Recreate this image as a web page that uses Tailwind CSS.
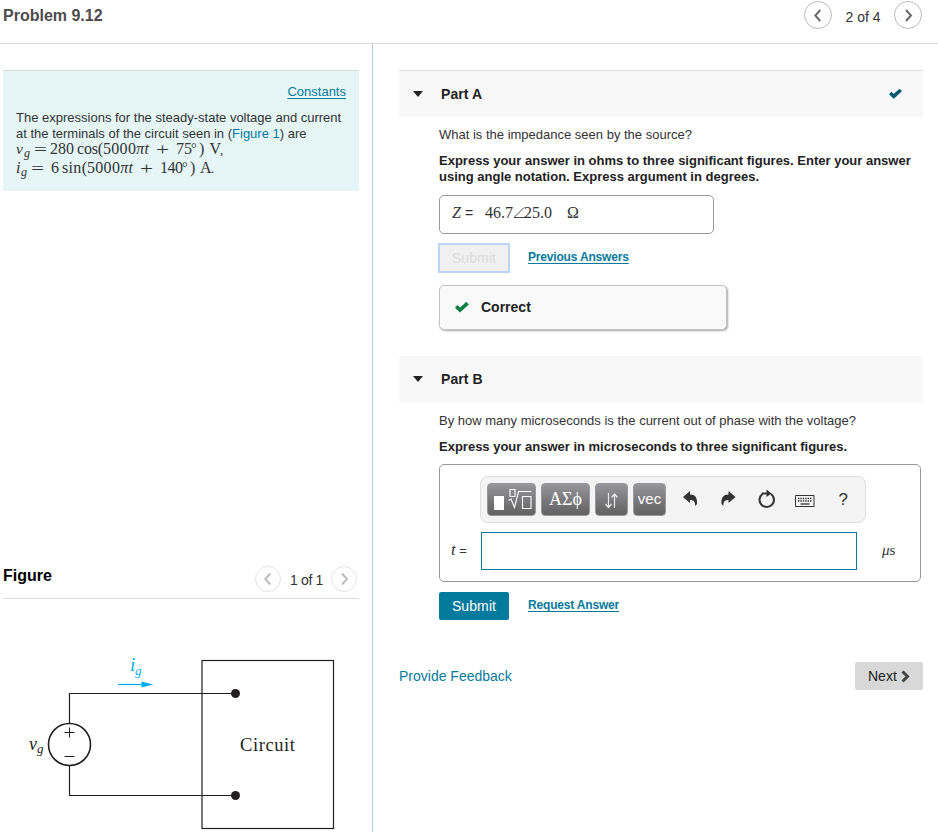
<!DOCTYPE html>
<html lang="en">
<head>
<meta charset="utf-8">
<title>Problem 9.12</title>
<script src="https://cdn.jsdelivr.net/npm/@tailwindcss/browser@4"></script>
</head>
<body class="w-[938px] h-[832px] overflow-hidden bg-white font-['Liberation_Sans',Arial,sans-serif] text-[13px] leading-4 text-[#333]">
<header class="h-11 border-b border-[#dcdcdc] flex justify-between pl-[3px] pr-4">
  <h1 class="text-base leading-[18px] font-bold text-[#4c4c4c] pt-[7px]">Problem 9.12</h1>
  <nav class="flex pt-px text-sm">
    <button class="size-7 rounded-full border border-[#bbb]" aria-label="Previous">
      <svg class="block size-[26px]" viewBox="0 0 26 26" fill="none" stroke="#666" stroke-width="1.900"><path d="M15.300 8 10.300 13.500l5 5.500"/></svg>
    </button>
    <span class="w-[62px] text-center pt-[6px]">2 of 4</span>
    <button class="size-7 rounded-full border border-[#bbb]" aria-label="Next">
      <svg class="block size-[26px]" viewBox="0 0 26 26" fill="none" stroke="#666" stroke-width="1.900"><path d="m11 8 5 5.500-5 5.500"/></svg>
    </button>
  </nav>
</header>
<div class="flex h-[788px]">
  <aside class="w-[373px] shrink-0 border-r border-[#b5cbdf] pl-[3px] pr-[13px] pt-[26px] flex flex-col">
    <section class="h-[121px] border-t border-[#dcdcdc] bg-[#e6f6f7] pl-[13px] pr-[13px] pt-[13px]">
      <div class="text-right text-[#067a9c]"><a class="underline underline-offset-2">Constants</a></div>
      <p class="mt-[10px] whitespace-nowrap">The expressions for the steady-state voltage and current<br>at the terminals of the circuit seen in (<a class="text-[#067a9c]">Figure 1</a>) are</p>
      <svg class="block overflow-visible w-[330px] h-[42px] font-['Liberation_Serif',serif]" viewBox="16 142 330 42" font-size="16" fill="#333">
        <g>
          <text x="16" y="154" font-style="italic" font-size="15.500">v</text><text x="24" y="157" font-style="italic" font-size="12">g</text>
          <text x="34" y="155" textLength="13" lengthAdjust="spacingAndGlyphs">=</text>
          <text x="50" y="154" textLength="24">280</text><text x="77" y="154" textLength="26">cos(</text>
          <text x="103" y="154" textLength="46">5000<tspan font-style="italic">πt</tspan></text>
          <text x="156" y="155" textLength="13" lengthAdjust="spacingAndGlyphs">+</text>
          <text x="176" y="154" textLength="16">75</text><text x="191" y="153" font-size="14">°</text><text x="199" y="154">)</text>
          <text x="209.500" y="154">V</text><text x="220" y="154" font-size="13">,</text>
        </g>
        <g>
          <text x="16" y="173" font-style="italic" font-size="16">i</text><text x="21" y="176" font-style="italic" font-size="12">g</text>
          <text x="31" y="174" textLength="13" lengthAdjust="spacingAndGlyphs">=</text>
          <text x="51" y="173">6</text><text x="62" y="173" textLength="25">sin(</text>
          <text x="87" y="173" textLength="46">5000<tspan font-style="italic">πt</tspan></text>
          <text x="140" y="174" textLength="13" lengthAdjust="spacingAndGlyphs">+</text>
          <text x="160" y="173" textLength="23">140</text><text x="182" y="172" font-size="14">°</text><text x="190" y="173">)</text>
          <text x="200" y="173">A</text><text x="211" y="173" font-size="13">.</text>
        </g>
      </svg>
    </section>
    <section class="mt-[375px]">
      <div class="flex justify-between h-[33px] border-b border-[#dcdcdc] pr-[2px]">
        <h2 class="text-base leading-[18px] font-bold text-black pt-px">Figure</h2>
        <nav class="flex text-sm">
          <button class="size-[26px] rounded-full border border-[#e4e4e4]" aria-label="Previous figure"><svg class="block size-6" viewBox="0 0 24 24" fill="none" stroke="#bbb" stroke-width="1.900"><path d="m14.300 6.500-5 5.500 5 5.500"/></svg></button>
          <span class="w-[50px] text-center pt-[4px] pl-px tracking-[-0.3px]">1 of 1</span>
          <button class="size-[26px] rounded-full border border-[#e4e4e4]" aria-label="Next figure"><svg class="block size-6" viewBox="0 0 24 24" fill="none" stroke="#bbb" stroke-width="1.900"><path d="m10 6.500 5 5.500-5 5.500"/></svg></button>
        </nav>
      </div>
      <svg class="block w-[356px] h-[232px]" viewBox="3 599 356 232" fill="none" stroke="#231f20" stroke-width="1.200" font-family="'Liberation Serif',serif">
        <rect x="202" y="660.500" width="131.500" height="168"/>
        <path d="M69.500 723v-29.500h165.500M69.500 765v30.500h165.500"/>
        <circle cx="69.500" cy="744.500" r="21" stroke-width="1.600"/>
        <path d="M64.500 732.500h10M69.500 727.500v10M64.500 756.500h10" stroke-width="1"/>
        <circle cx="235.500" cy="693.500" r="4.500" fill="#231f20" stroke="none"/>
        <circle cx="235.500" cy="795.500" r="4.500" fill="#231f20" stroke="none"/>
        <path d="M118 684.500h25" stroke="#00aeef"/><path d="m141.500 681.500 12 3-12 3z" fill="#00aeef" stroke="none"/>
        <g stroke="none" font-style="italic"><text x="130" y="671" font-size="19" fill="#00aeef">i</text><text x="135" y="675" font-size="13" fill="#00aeef">g</text>
        <text x="29" y="750" font-size="18" fill="#231f20">v</text><text x="37" y="753" font-size="13" fill="#231f20">g</text></g>
        <text x="240" y="751" font-size="18.500" textLength="55" fill="#231f20" stroke="none">Circuit</text>
      </svg>
    </section>
  </aside>
  <main class="w-[550px] pl-[26px] pt-[26px]">
    <section>
      <div class="h-[47px] border-t border-[#dcdcdc] bg-[#f8f8f8] flex items-center pl-[14px] pr-[21px]">
        <svg class="w-[10px] h-[6px]" viewBox="0 0 10 6"><path d="M0 0h10L5 6z" fill="#222"/></svg>
        <h3 class="ml-[18px] text-sm font-bold text-[#222] grow tracking-[0.1px]">Part A</h3>
        <svg class="w-[13px] h-[11px] mb-[2px]" viewBox="0 0 13 11" fill="none" stroke="#005a70" stroke-width="3.600"><path d="m1.200 5 3.600 3.300 6.900-6.300"/></svg>
      </div>
      <div class="pl-10 pt-[10px]">
        <p>What is the impedance seen by the source?</p>
        <p class="mt-[10px] font-bold whitespace-nowrap text-[#222]">Express your answer in ohms to three significant figures. Enter your answer<br>using angle notation. Express argument in degrees.</p>
        <div class="mt-[10px] w-[275px] h-[39px] rounded-[5px] border border-[#999] font-['Liberation_Serif',serif]">
          <svg class="w-[273px] h-[37px]" viewBox="440 196 273 37" font-size="16" fill="#333"><text x="452" y="218" font-style="italic">Z</text><text x="465" y="218" font-size="14" font-family="Liberation Sans,sans-serif">=</text><text x="485" y="218" textLength="28">46.7</text><path d="M524 207.500 514 217.500h11" fill="none" stroke="#333" stroke-width=".9"/><text x="524" y="218" textLength="28">25.0</text><text x="567" y="218">Ω</text></svg>
        </div>
        <div class="flex mt-[9px] -ml-px">
          <button class="w-[72px] h-[30px] border-2 border-[#bcd4f8] bg-[#f0f0f0] text-sm text-[#ddd] tracking-[0.1px]">Submit</button>
          <a class="ml-[18px] mt-[6px] text-xs font-bold underline underline-offset-2 tracking-[-0.18px] text-[#067a9c]">Previous Answers</a>
        </div>
        <div class="mt-3 w-[288px] h-[45px] border border-[#c2c2c2] rounded-[5px] bg-[#f9f9f9] shadow-[1px_1px_2px_#aaa] flex items-center pl-[15px] pb-px">
          <svg class="w-[14px] h-[12px]" viewBox="0 0 14 12" fill="none" stroke="#0b8043" stroke-width="3.600"><path d="m1.200 5.400 3.800 3.600 7.600-6.800"/></svg>
          <span class="ml-[12px] text-sm font-bold text-[#222]">Correct</span>
        </div>
      </div>
    </section>
    <section class="mt-[26px]">
      <div class="h-[46px] bg-[#f8f8f8] flex items-center pl-[14px]">
        <svg class="w-[10px] h-[6px]" viewBox="0 0 10 6"><path d="M0 0h10L5 6z" fill="#222"/></svg>
        <h3 class="ml-[18px] text-sm font-bold text-[#222] tracking-[0.1px]">Part B</h3>
      </div>
      <div class="pl-10 pt-[11px]">
        <p>By how many microseconds is the current out of phase with the voltage?</p>
        <p class="mt-[10px] font-bold text-[#222]">Express your answer in microseconds to three significant figures.</p>
        <div class="mt-[9px] w-[482px] h-[118px] border border-[#999] rounded-[5px] pt-[11px]">
          <div class="ml-10 w-[386px] h-[47px] rounded-lg border border-[#ddd] bg-[#f4f4f4] flex pt-[6px] pl-[6px] gap-[5px] text-white">
            <button class="w-[49px] h-[33px] rounded bg-linear-to-b from-[#96959b] to-[#626262] border border-[#999]" aria-label="Templates"><svg class="w-[47px] h-[31px]" viewBox="0 0 47 31" fill="none" stroke="#fff" stroke-width="1.100"><path d="M6 12h10v14H6z" fill="#fff" stroke="none"/><path d="m20.500 16.500 2.500-1.500 3.500 8.500 4-16h13"/><path d="M34.500 12.500h8.500v12h-8.500zM22 5.500h5v7h-5z"/></svg></button>
            <button class="w-[49px] h-[33px] rounded bg-linear-to-b from-[#96959b] to-[#626262] border border-[#999] font-['Liberation_Serif',serif] text-[18px] leading-[29px]">ΑΣϕ</button>
            <button class="w-[33px] h-[33px] rounded bg-linear-to-b from-[#96959b] to-[#626262] border border-[#999]" aria-label="Subscript and superscript"><svg class="size-[31px]" viewBox="0 0 31 31" fill="none" stroke="#e9e9e9" stroke-width="1.200"><path d="M12.500 9v14M9.500 20l3 3.500 3-3.500M18.500 24V10M15.500 13.500l3-3.500 3 3.500"/></svg></button>
            <button class="w-[33px] h-[33px] rounded bg-linear-to-b from-[#96959b] to-[#626262] border border-[#999] text-[15px] leading-[27px] pb-[3px]">vec</button>
            <svg class="w-[190px] h-[34px]" viewBox="671 483 190 34" fill="#333">
              <path d="m683 497 7-6v3.500c5 0 7.500 3 7 9.500l-2 2c.5-4-1-6-5-6v3z"/>
              <path d="m735.500 497-7-6v3.500c-5 0-7.500 3-7 9.500l2 2c-.5-4 1-6 5-6v3z"/>
              <path d="M762.500 494a7.200 7.200 0 1 0 8.500 0" fill="none" stroke="#333" stroke-width="2.100"/><path d="m766.500 489.500 5 4-5 3.500z"/><path d="M761.800 493.500h5" stroke="#333" stroke-width="2"/>
              <path d="M795.500 495.500h18.500v11h-18.500z" fill="none" stroke="#333"/><path d="M798 498.500h14M798 501h14" stroke="#333" stroke-width="1.500" stroke-dasharray="1.400 1"/><path d="M800.500 504h9" stroke="#333" stroke-width="1.300"/>
              <text x="838.500" y="505" font-size="17">?</text>
            </svg>
          </div>
          <div class="flex mt-[9px]">
            <span class="w-[41px] pl-[11px] pt-[10px]"><i class="font-['Liberation_Serif',serif] text-[17px] leading-4">t</i> =</span>
            <div class="w-[376px] h-[38px] border border-[#067a9c] bg-white"></div>
            <span class="ml-[25px] pt-[10px] font-['Liberation_Serif',serif] text-[15px]"><i>μ</i>s</span>
          </div>
        </div>
        <div class="flex mt-[10px]">
          <button class="w-[70px] h-[28px] rounded-[2px] bg-[#047a9c] text-sm text-white tracking-[0.1px]">Submit</button>
          <a class="ml-[19px] mt-[5px] text-xs font-bold underline underline-offset-2 tracking-[-0.18px] text-[#067a9c]">Request Answer</a>
        </div>
      </div>
    </section>
    <footer class="mt-[42px] flex justify-between text-sm">
      <a class="mt-[4px] text-[#067a9c]">Provide Feedback</a>
      <button class="w-[68px] h-[28px] bg-[#d8d8d8] rounded-[2px] flex items-center pl-[13px] text-[#222]">Next<svg class="ml-[4px] w-[9px] h-[13px]" viewBox="0 0 9 13" fill="none" stroke="#444" stroke-width="3"><path d="m1.500 1.500 5 5-5 5"/></svg></button>
    </footer>
  </main>
</div>
</body>
</html>
